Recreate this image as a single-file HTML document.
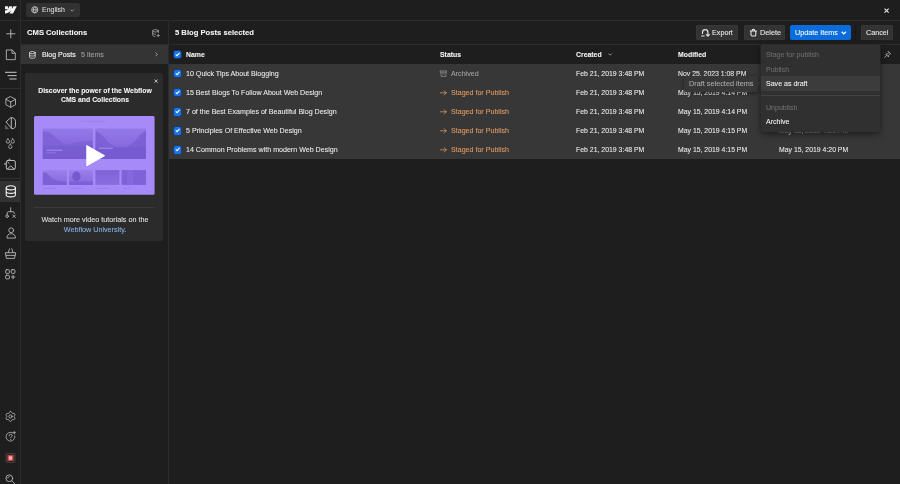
<!DOCTYPE html>
<html lang="en">
<head>
<meta charset="utf-8">
<title>CMS Collections</title>
<style>
*{box-sizing:border-box;margin:0;padding:0}
html,body{width:900px;height:484px;overflow:hidden;background:#1e1e1e}
body{position:relative;font-family:"Liberation Sans",sans-serif;font-size:7.1px;color:#e6e6e6;line-height:1}
.abs{position:absolute}
.t{position:absolute;white-space:nowrap;line-height:10px;height:10px;will-change:transform;-webkit-text-stroke:.07px currentColor}
.b{font-weight:bold}
svg{position:absolute;overflow:visible}
.ic{fill:none;stroke:#c6c6c6;stroke-width:1;stroke-linecap:round;stroke-linejoin:round}
/* frame */
#topline{left:0;top:20px;width:900px;height:1px;background:#2c2c2c}
#sideline{left:20px;top:0;width:1px;height:484px;background:#2c2c2c}
#panelline{left:168px;top:21px;width:1px;height:463px;background:#2c2c2c}
#headline{left:21px;top:44px;width:879px;height:1px;background:#2c2c2c}
/* buttons */
.btn{position:absolute;top:25px;height:15px;border-radius:2px;background:#333333;box-shadow:0 0 0 .5px #3d3d3d inset}
.btn .t{top:2.6px;color:#ececec;font-size:7.2px}
/* table */
.row{position:absolute;left:169px;width:731px;height:19px;background:#373737}
.row .t{top:4.6px}
.cb{position:absolute;left:4.5px;top:5.6px;width:7.6px;height:7.6px;border-radius:1.7px;background:#1a74e8;box-shadow:0 0 0 .7px #113f86}
.cb svg{left:1.2px;top:1.4px}
.name{left:16.7px;color:#ececec}
.st{left:282.4px;color:#e39b62}
.cr{left:407.2px;color:#ececec;font-size:6.92px}
.md{left:508.6px;color:#ececec;font-size:6.88px}
.pb{left:610px;color:#ececec;font-size:6.88px}
.menu .t{left:5px;font-size:7.05px}
</style>
</head>
<body>

<!-- frame lines -->
<div class="abs" id="topline"></div>
<div class="abs" id="sideline"></div>
<div class="abs" id="panelline"></div>
<div class="abs" id="headline"></div>

<!-- TOP BAR -->
<svg style="left:5px;top:6.1px" width="11.8" height="7.8" viewBox="0 0 24 15"><path fill="#f2f2f2" d="M24 0 16.34 14.97H9.15l3.2-6.2h-.14C9.57 12.2 5.62 14.46 0 14.97V8.85s3.6-.21 5.71-2.44H0V0h6.42v5.28h.14L9.18 0h4.86v5.25h.14L16.9 0z"/></svg>
<div class="abs" style="left:26px;top:3px;width:54px;height:13.5px;border-radius:2px;background:#313131"></div>
<svg style="left:31px;top:6.2px" width="7.6" height="7.6" viewBox="0 0 16 16"><g fill="none" stroke="#d0d0d0" stroke-width="1.6"><circle cx="8" cy="8" r="6.6"/><ellipse cx="8" cy="8" rx="2.8" ry="6.6"/><path d="M1.4 8h13.2"/></g></svg>
<div class="t" style="left:42.3px;top:5px;font-size:7px;color:#dcdcdc">English</div>
<svg style="left:70px;top:8.6px" width="4.4" height="2.8" viewBox="0 0 8 5"><path d="M1 1l3 3 3-3" fill="none" stroke="#bdbdbd" stroke-width="1.3"/></svg>
<svg style="left:884px;top:7.600px" width="5.200" height="5.200" viewBox="0 0 10 10"><path d="M1 1l8 8M9 1l-8 8" fill="none" stroke="#ececec" stroke-width="2"/></svg>

<!-- LEFT ICON BAR -->
<svg style="left:6px;top:28.8px" width="9.6" height="9.6" viewBox="0 0 16 16"><path d="M8 0.5v15M0.5 8h15" fill="none" stroke="#d4d4d4" stroke-width="1.3"/></svg>
<svg style="left:6px;top:49px" width="10" height="11.6" viewBox="0 0 14 16"><path class="ic" style="stroke-width:1.13" d="M1 1.2h7.5L13 5.8v9H1zM8.4 1.4v4.5h4.4"/></svg>
<svg style="left:5px;top:70.6px" width="11.6" height="9" viewBox="0 0 16 12"><path d="M0 1.6h16M3.6 6.2h12.4M6 10.8h10" fill="none" stroke="#cfcfcf" stroke-width="1.35"/></svg>
<div class="abs" style="left:0;top:87.5px;width:20px;height:1px;background:#303030"></div>
<!-- cube -->
<svg style="left:5px;top:95.8px" width="11.4" height="12" viewBox="0 0 16 17"><path class="ic" style="stroke-width:1.13" d="M8 1l6.8 3.6v7.8L8 16l-6.8-3.6V4.6zM1.4 4.8L8 8.4l6.6-3.6M8 8.4V16"/></svg>
<!-- variables -->
<svg style="left:0;top:110px" width="21" height="25" viewBox="0 110 21 25"><path d="M5 124.800L9.400 129.200H5z" fill="#5c5c5c"/><path class="ic" style="stroke-width:0.91" d="M11.200 117.600c2.800 0 4.300 1.500 4.300 4v3.600c0 2.600-1.500 3.800-3.600 3.500L6.300 122.200zM11.300 118v10.400"/></svg>
<!-- drops -->
<svg style="left:5.4px;top:138.2px" width="10.6" height="11.4" viewBox="0 0 16 17"><g class="ic" style="stroke-width:1.13"><path d="M4.4 1.2C3 3 2 4.200 2 5.400a2.400 2.400 0 004.800 0C6.800 4.200 5.800 3 4.400 1.200z"/><path d="M11.600 1.200c-1.400 1.800-2.400 3-2.400 4.200a2.400 2.400 0 004.800 0c0-1.200-1-2.400-2.400-4.200z"/><path d="M8 9.200c-1.400 1.800-2.400 3-2.400 4.200a2.400 2.400 0 004.800 0c0-1.200-1-2.400-2.400-4.200z"/></g></svg>
<!-- image -->
<svg style="left:0;top:154px" width="21" height="22" viewBox="0 154 21 22"><g class="ic" style="stroke-width:.95"><rect x="6.300" y="160.500" width="9" height="8.800" rx="1.400"/><path d="M7.400 169.100l3.400-3.400 3.400 3.400M7.900 162.200l1.100 1.100"/><path d="M8.600 159.400h1.800M5 163.100v1.700" style="stroke-width:1.500;stroke:#9a9a9a;stroke-linecap:butt"/></g></svg>
<div class="abs" style="left:0;top:178px;width:20px;height:1px;background:#303030"></div>
<!-- cms active -->
<div class="abs" style="left:0;top:180.600px;width:20px;height:21px;background:#323232"></div>
<svg style="left:4.6px;top:185.4px" width="11.6" height="12.6" viewBox="0 0 16 18"><g fill="none" stroke="#f4f4f4" stroke-width="1.5"><ellipse cx="8" cy="4" rx="6.600" ry="3"/><path d="M1.400 4v10c0 1.700 3 3 6.600 3s6.600-1.300 6.600-3V4M1.400 9c0 1.700 3 3 6.600 3s6.600-1.300 6.600-3"/></g></svg>
<!-- logic -->
<svg style="left:5px;top:206.600px" width="11.400" height="11.400" viewBox="0 0 16 16"><g class="ic" style="stroke-width:1.13"><path d="M8 1v5.600M3 11V8.400c0-1 .8-1.800 1.800-1.800h6.400c1 0 1.800.8 1.800 1.800V9"/><circle cx="3" cy="13" r="1.800"/><path d="M11 11.200l3.600 3.600M14.600 11.200L11 14.800"/></g></svg>
<!-- user -->
<svg style="left:5.600px;top:226.900px" width="10.400" height="11.400" viewBox="0 0 14 16"><g class="ic" style="stroke-width:1.13"><circle cx="7" cy="4.600" r="3.400"/><path d="M1 15c0-3.400 2.600-5.600 6-5.600s6 2.200 6 5.600z"/></g></svg>
<!-- basket -->
<svg style="left:5px;top:248.300px" width="11.400" height="11.400" viewBox="0 0 16 16"><g class="ic" style="stroke-width:1.13"><path d="M1 6.600h14l-1.600 8H2.600zM4.600 6.400L6.400 1.200M11.400 6.400L9.600 1.200M1.800 10.400h12.400"/></g></svg>
<!-- apps -->
<svg style="left:5.400px;top:269px" width="10.600" height="10.600" viewBox="0 0 16 16"><g class="ic" style="stroke-width:1.22"><rect x="1" y="1" width="5.600" height="5.600" rx="1.400"/><rect x="9.400" y="1" width="5.600" height="5.600" rx="1.400"/><rect x="1" y="9.400" width="5.600" height="5.600" rx="1.400"/><path d="M12.200 9.600v5.200M9.600 12.200h5.200"/></g></svg>
<!-- settings -->
<svg style="left:4.9px;top:410.9px" width="11" height="11" viewBox="0 0 16 16"><g class="ic" style="stroke-width:1.13"><path d="M8.00 0.75L8.62 0.90L9.18 1.33L9.63 1.91L9.99 2.53L10.31 3.04L10.67 3.37L11.14 3.51L11.74 3.54L12.45 3.55L13.19 3.65L13.83 3.91L14.28 4.37L14.46 4.99L14.37 5.68L14.09 6.37L13.74 6.99L13.46 7.52L13.35 8.00L13.46 8.48L13.74 9.01L14.09 9.63L14.37 10.32L14.46 11.01L14.28 11.62L13.83 12.09L13.19 12.35L12.45 12.45L11.74 12.46L11.14 12.49L10.68 12.63L10.31 12.96L9.99 13.47L9.63 14.09L9.18 14.67L8.62 15.10L8.00 15.25L7.38 15.10L6.82 14.67L6.37 14.09L6.01 13.47L5.69 12.96L5.32 12.63L4.86 12.49L4.26 12.46L3.55 12.45L2.81 12.35L2.17 12.09L1.72 11.63L1.54 11.01L1.63 10.32L1.91 9.63L2.26 9.01L2.54 8.48L2.65 8.00L2.54 7.52L2.26 6.99L1.91 6.37L1.63 5.68L1.54 4.99L1.72 4.38L2.17 3.91L2.81 3.65L3.55 3.55L4.26 3.54L4.86 3.51L5.33 3.37L5.69 3.04L6.01 2.53L6.37 1.91L6.82 1.33L7.38 0.90z"/><circle cx="8" cy="8" r="2.3"/></g></svg>
<!-- help -->
<svg style="left:5px;top:431.400px" width="11.400" height="11.400" viewBox="0 0 16 16"><g class="ic" style="stroke-width:1.04"><path d="M10.400 2.400A6.200 6.200 0 1013.800 7"/><path d="M5.800 6.800c0-1.400 1-2.200 2.200-2.200s2 .8 2 1.800c0 1.600-2 1.600-2 3.200M8 11.800v.2"/><path d="M13 .6v3.600M11.200 2.400h3.600" stroke-width="1"/></g></svg>
<!-- red record -->
<svg style="left:0;top:450px" width="21" height="16" viewBox="0 450 21 16"><rect x="5.900" y="453.400" width="9.200" height="9.200" rx="1" fill="#2b2b2b" stroke="#444" stroke-width=".8"/><rect x="7.500" y="455" width="6" height="6" rx=".6" fill="#d6363f"/><rect x="8.800" y="456.300" width="3.400" height="3.400" fill="#ffb9b9"/></svg>
<!-- search -->
<svg style="left:5.300px;top:474px" width="10.400" height="10.400" viewBox="0 0 16 16"><g class="ic" style="stroke-width:1.22"><circle cx="6.600" cy="6.600" r="5.200"/><path d="M10.600 10.600L15 15M3.600 6.600l3-3"/></g></svg>

<!-- CMS PANEL -->
<div class="t b" style="left:26.900px;top:27.600px;font-size:7.650px;color:#f5f5f5">CMS Collections</div>
<svg style="left:151.600px;top:28.600px" width="8" height="8.200" viewBox="0 0 16 16"><g class="ic" style="stroke:#bdbdbd;stroke-width:1.350"><ellipse cx="7" cy="3.400" rx="5.600" ry="2.400"/><path d="M1.400 3.400v9.200c0 1.200 2 2.200 4.600 2.400M12.600 3.400v4M1.400 8c0 1.300 2.400 2.400 5.600 2.400M12.400 10.400v5M10 13h5"/></g></svg>

<div class="abs" style="left:21px;top:45.300px;width:147px;height:18.900px;background:#343434"></div>
<svg style="left:29.200px;top:51px" width="6.800" height="7.800" viewBox="0 0 14 16"><g class="ic" style="stroke:#e0e0e0;stroke-width:1.700"><ellipse cx="7" cy="3.400" rx="5.800" ry="2.400"/><path d="M1.200 3.400v9.200C1.200 14 3.800 15 7 15s5.800-1 5.800-2.400V3.400M1.200 8c0 1.400 2.600 2.400 5.800 2.400s5.800-1 5.800-2.400"/></g></svg>
<div class="t" style="left:42.200px;top:49.600px;font-size:7.050px;color:#f0f0f0;-webkit-text-stroke:.15px #f0f0f0">Blog Posts</div>
<div class="t" style="left:80.900px;top:49.600px;font-size:7.100px;color:#a0a0a0">5 items</div>
<svg style="left:155px;top:52.200px" width="3" height="4.800" viewBox="0 0 5 8"><path d="M1 1l3 3-3 3" fill="none" stroke="#c8c8c8" stroke-width="1.200"/></svg>

<!-- promo card -->
<div class="abs" style="left:25.400px;top:72.600px;width:137.200px;height:168.200px;border-radius:2px;background:#2b2b2b"></div>
<svg style="left:154px;top:79.400px" width="4.200" height="4.200" viewBox="0 0 8 8"><path d="M1 1l6 6M7 1L1 7" fill="none" stroke="#e6e6e6" stroke-width="1.500"/></svg>
<div class="t b" style="left:25.500px;top:85.700px;width:138px;text-align:center;font-size:6.850px;color:#f5f5f5">Discover the power of the Webflow</div>
<div class="t b" style="left:25.500px;top:94.900px;width:138px;text-align:center;font-size:6.850px;color:#f5f5f5">CMS and Collections</div>
<!-- video thumb -->
<svg style="left:34.4px;top:116.4px" width="120.6" height="78.8" viewBox="0 0 120.6 78.8">
  <defs>
    <linearGradient id="gA" x1="0" y1="0" x2="0" y2="1"><stop offset="0" stop-color="#9378e8"/><stop offset=".45" stop-color="#8a6ee1"/><stop offset="1" stop-color="#7a5ed3"/></linearGradient>
    <linearGradient id="gB" x1="0" y1="0" x2="0" y2="1"><stop offset="0" stop-color="#9a80ec"/><stop offset="1" stop-color="#8668de"/></linearGradient>
    <linearGradient id="gC" x1="0" y1="0" x2="0" y2="1"><stop offset="0" stop-color="#7f62d6"/><stop offset="1" stop-color="#8a6ee0"/></linearGradient>
    <clipPath id="cL"><rect x="8.7" y="12.5" width="50.2" height="30.4"/></clipPath>
    <clipPath id="cR"><rect x="61.4" y="12.5" width="50.6" height="30.4"/></clipPath>
    <clipPath id="c1"><rect x="8.7" y="54.1" width="24.2" height="14.8"/></clipPath>
    <clipPath id="c2"><rect x="34.9" y="54.1" width="24" height="14.8"/></clipPath>
  </defs>
  <rect width="120.6" height="78.8" rx="1.5" fill="#a68af8"/>
  <rect x="47" y="4.6" width="24" height="1.2" fill="#9b7ff0"/>
  <!-- big left -->
  <rect x="8.700" y="12.500" width="50.200" height="30.400" fill="url(#gA)"/>
  <g clip-path="url(#cL)"><path d="M8.700 15l7 1.500 9 7.500 8 5 10-3 16.200-1.500v18.400H8.700z" fill="#7c60d5" opacity=".85"/><path d="M8.700 30h50.200v12.900H8.700z" fill="#7458cd" opacity=".6"/>
  <rect x="12.400" y="33.600" width="16" height="1.300" fill="#9d84ee"/><rect x="12.400" y="36.400" width="10" height=".9" fill="#9178e6"/></g>
  <!-- big right -->
  <rect x="61.400" y="12.500" width="50.600" height="30.400" fill="url(#gA)"/>
  <g clip-path="url(#cR)"><path d="M61.400 14.500l6 4 7 8 8 5h10l8-6 6-7 5.600-4v28.400H61.400z" fill="#7a5ed3" opacity=".85"/><path d="M61.400 31h50.600v11.900H61.400z" fill="#7357cc" opacity=".55"/>
  <rect x="64.800" y="31.600" width="14" height="1.300" fill="#9d84ee"/></g>
  <!-- small tiles -->
  <rect x="8.700" y="54.100" width="24.200" height="14.800" fill="url(#gB)"/>
  <g clip-path="url(#c1)"><path d="M8.700 56l4 1 6 6 6 2 8.200 1v3H8.700z" fill="#7b5fd4" opacity=".9"/></g>
  <rect x="34.900" y="54.100" width="24" height="14.800" fill="url(#gB)"/>
  <g clip-path="url(#c2)"><ellipse cx="42.400" cy="60.400" rx="4.200" ry="4.800" fill="#7658cf"/><path d="M34.900 65.500h24v3.400h-24z" fill="#7c60d5"/></g>
  <rect x="61.400" y="54.100" width="24" height="14.800" fill="url(#gC)"/>
  <rect x="87.600" y="54.100" width="24.400" height="14.800" fill="#7f62d7"/>
  <rect x="93" y="54.100" width="6" height="14.800" fill="#876be0" opacity=".7"/>
  <!-- captions -->
  <rect x="10" y="72" width="12" height="1" fill="#9a7eee"/><rect x="36.400" y="72" width="13" height="1" fill="#9a7eee"/><rect x="62.800" y="72" width="12" height="1" fill="#9a7eee"/><rect x="89" y="72" width="8" height="1" fill="#9a7eee"/>
  <!-- play -->
  <path d="M52.800 29.600L70.600 39.700 52.800 49.800z" fill="#ffffff" stroke="#ffffff" stroke-width="1" stroke-linejoin="round"/>
</svg>
<div class="abs" style="left:34.400px;top:207.300px;width:120.600px;height:1px;background:#3a3a3a"></div>
<div class="t" style="left:25.500px;top:214.600px;width:138px;text-align:center;font-size:7.200px;color:#e0e0e0">Watch more video tutorials on the</div>
<div class="t" style="left:25.500px;top:224.600px;width:138px;text-align:center;font-size:7.200px;color:#e0e0e0"><span style="color:#8ab4e8">Webflow University</span>.</div>

<!-- MAIN HEADER -->
<div class="t b" style="left:175.300px;top:28.300px;font-size:7.650px;color:#f5f5f5">5 Blog Posts selected</div>

<div class="btn" style="left:696px;width:42.400px">
  <svg style="left:0;top:0" width="20" height="15" viewBox="696 25 20 15"><g class="ic" style="stroke:#e4e4e4;stroke-width:1.150"><path d="M702.500 33.400v-1a2.700 2.700 0 015.400 0v3.600M706.300 34.600l1.600 1.600 1.500-1.600M701.600 36h2.600"/></g></svg>
  <div class="t" style="left:16.200px">Export</div>
</div>
<div class="btn" style="left:743.600px;width:41.600px">
  <svg style="left:0;top:0" width="20" height="15" viewBox="743.600 25 20 15"><g class="ic" style="stroke:#e4e4e4;stroke-width:1.100"><path d="M749.900 31h6.200M750.600 31.200v3.600a1.200 1.200 0 001.200 1.200h2.400a1.200 1.200 0 001.200-1.200v-3.600M751.700 30.800c0-.9.500-1.400 1.300-1.400s1.300.5 1.300 1.400"/></g></svg>
  <div class="t" style="left:16.500px;font-size:7.300px">Delete</div>
</div>
<div class="btn" style="left:790px;width:61px;background:#0a6ddb;box-shadow:none">
  <div class="t" style="left:4.900px;color:#fff">Update Items</div>
  <svg style="left:51.300px;top:5.800px" width="5.600" height="3.700" viewBox="0 0 8 5"><path d="M1 1l3 3 3-3" fill="none" stroke="#fff" stroke-width="1.900"/></svg>
</div>
<div class="abs" style="left:855.300px;top:25px;width:1px;height:15px;background:#171717"></div>
<div class="btn" style="left:861px;width:31.800px">
  <div class="t" style="left:4.800px">Cancel</div>
</div>

<!-- TABLE HEADER -->
<div class="t b" style="left:185.700px;top:49.800px;font-size:6.900px;color:#f5f5f5">Name</div>
<div class="t b" style="left:439.500px;top:49.800px;font-size:6.900px;color:#f5f5f5">Status</div>
<div class="t b" style="left:576.200px;top:49.800px;font-size:6.900px;color:#f5f5f5">Created</div>
<svg style="left:607.600px;top:52.800px" width="4.400" height="2.800" viewBox="0 0 8 5"><path d="M1 1l3 3 3-3" fill="none" stroke="#bdbdbd" stroke-width="1.300"/></svg>
<div class="t b" style="left:677.600px;top:49.800px;font-size:6.900px;color:#f5f5f5">Modified</div>
<div class="cb" style="left:173.500px;top:50.800px"><svg width="5.200" height="4.600" viewBox="0 0 10 9"><path d="M1.400 4.600l2.600 2.600L8.800 1.600" fill="none" stroke="#fff" stroke-width="2"/></svg></div>
<svg style="left:883.600px;top:51px" width="7.200" height="7.200" viewBox="0 0 14 14"><g class="ic" style="stroke:#c4c4c4;stroke-width:1.400"><path d="M8.400 1.200l4.400 4.400-1.400.6-2.400 2.400-.2 3-5.400-5.400 3-.2 2.400-2.400zM5.600 8.400L1.400 12.600"/></g></svg>

<!-- TABLE ROWS -->
<div class="abs" style="left:169px;top:63.500px;width:731px;height:95.900px;background:#373737"></div>
<div class="row" style="top:64.300px">
  <div class="cb"><svg width="5.200" height="4.600" viewBox="0 0 10 9"><path d="M1.400 4.600l2.600 2.600L8.800 1.600" fill="none" stroke="#fff" stroke-width="2"/></svg></div>
  <div class="t name">10 Quick Tips About Blogging</div>
  <svg style="left:270.600px;top:5.800px" width="7" height="7.200" viewBox="0 0 14 14"><g class="ic" style="stroke:#a8a8a8;stroke-width:1.150"><path d="M1 1.600h12v2.600H1zM2 4.400v8.200h10V4.400M5.200 7.600h3.600"/></g></svg>
  <div class="t st" style="color:#a3a3a3">Archived</div>
  <div class="t cr">Feb 21, 2019 3:48 PM</div>
  <div class="t md">Nov 25, 2023 1:08 PM</div>
</div>
<div class="row" style="top:83.300px">
  <div class="cb"><svg width="5.200" height="4.600" viewBox="0 0 10 9"><path d="M1.400 4.600l2.600 2.600L8.800 1.600" fill="none" stroke="#fff" stroke-width="2"/></svg></div>
  <div class="t name">15 Best Blogs To Follow About Web Design</div>
  <svg style="left:270.600px;top:6.600px" width="7" height="5.600" viewBox="0 0 14 11"><path class="ic" style="stroke:#e39b62;stroke-width:1.500" d="M1 5.500h11.600M8.400 1.200l4.300 4.300-4.300 4.300"/></svg>
  <div class="t st">Staged for Publish</div>
  <div class="t cr">Feb 21, 2019 3:48 PM</div>
  <div class="t md">May 15, 2019 4:14 PM</div>
  <div class="t pb">May 15, 2019 4:19 PM</div>
</div>
<div class="row" style="top:102.400px">
  <div class="cb"><svg width="5.200" height="4.600" viewBox="0 0 10 9"><path d="M1.400 4.600l2.600 2.600L8.800 1.600" fill="none" stroke="#fff" stroke-width="2"/></svg></div>
  <div class="t name">7 of the Best Examples of Beautiful Blog Design</div>
  <svg style="left:270.600px;top:6.600px" width="7" height="5.600" viewBox="0 0 14 11"><path class="ic" style="stroke:#e39b62;stroke-width:1.500" d="M1 5.500h11.600M8.400 1.200l4.300 4.300-4.300 4.300"/></svg>
  <div class="t st">Staged for Publish</div>
  <div class="t cr">Feb 21, 2019 3:48 PM</div>
  <div class="t md">May 15, 2019 4:14 PM</div>
  <div class="t pb">May 15, 2019 4:19 PM</div>
</div>
<div class="row" style="top:121.400px">
  <div class="cb"><svg width="5.200" height="4.600" viewBox="0 0 10 9"><path d="M1.400 4.600l2.600 2.600L8.800 1.600" fill="none" stroke="#fff" stroke-width="2"/></svg></div>
  <div class="t name">5 Principles Of Effective Web Design</div>
  <svg style="left:270.600px;top:6.600px" width="7" height="5.600" viewBox="0 0 14 11"><path class="ic" style="stroke:#e39b62;stroke-width:1.500" d="M1 5.500h11.600M8.400 1.200l4.300 4.300-4.300 4.300"/></svg>
  <div class="t st">Staged for Publish</div>
  <div class="t cr">Feb 21, 2019 3:48 PM</div>
  <div class="t md">May 15, 2019 4:15 PM</div>
  <div class="t pb">May 15, 2019 4:20 PM</div>
</div>
<div class="row" style="top:140.400px;height:19.100px">
  <div class="cb"><svg width="5.200" height="4.600" viewBox="0 0 10 9"><path d="M1.400 4.600l2.600 2.600L8.800 1.600" fill="none" stroke="#fff" stroke-width="2"/></svg></div>
  <div class="t name">14 Common Problems with modern Web Design</div>
  <svg style="left:270.600px;top:6.600px" width="7" height="5.600" viewBox="0 0 14 11"><path class="ic" style="stroke:#e39b62;stroke-width:1.500" d="M1 5.500h11.600M8.400 1.200l4.300 4.300-4.300 4.300"/></svg>
  <div class="t st">Staged for Publish</div>
  <div class="t cr">Feb 21, 2019 3:48 PM</div>
  <div class="t md">May 15, 2019 4:15 PM</div>
  <div class="t pb">May 15, 2019 4:20 PM</div>
</div>

<!-- TOOLTIP -->
<div class="abs" style="left:684px;top:75.900px;width:74px;height:15.900px;border-radius:2px;background:#373737;box-shadow:0 1px 4px rgba(0,0,0,.45)">
  <svg style="left:73.600px;top:5.100px" width="3" height="5.600" viewBox="0 0 3 5.600"><path d="M0 0l3 2.800-3 2.800z" fill="#373737"/></svg>
  <div class="t" style="left:5.200px;top:2.900px;font-size:7.300px;color:#ababab">Draft selected items</div>
</div>

<!-- DROPDOWN MENU -->
<div class="abs menu" style="left:761px;top:45px;width:119px;height:86.600px;border-radius:2.500px;background:#303030;box-shadow:0 2px 6px rgba(0,0,0,.5),0 0 0 .5px #3a3a3a">
  <div class="t" style="top:5.200px;color:#6e6e6e">Stage for publish</div>
  <div class="t" style="top:19.500px;color:#6e6e6e">Publish</div>
  <div class="abs" style="left:0;top:31.400px;width:119px;height:14.400px;background:#3c3c3c"></div>
  <div class="t" style="top:33.800px;color:#f2f2f2">Save as draft</div>
  <div class="abs" style="left:0;top:50px;width:119px;height:1px;background:#424242"></div>
  <div class="t" style="top:57.600px;color:#6e6e6e">Unpublish</div>
  <div class="t" style="top:72px;color:#f2f2f2">Archive</div>
</div>

</body>
</html>
